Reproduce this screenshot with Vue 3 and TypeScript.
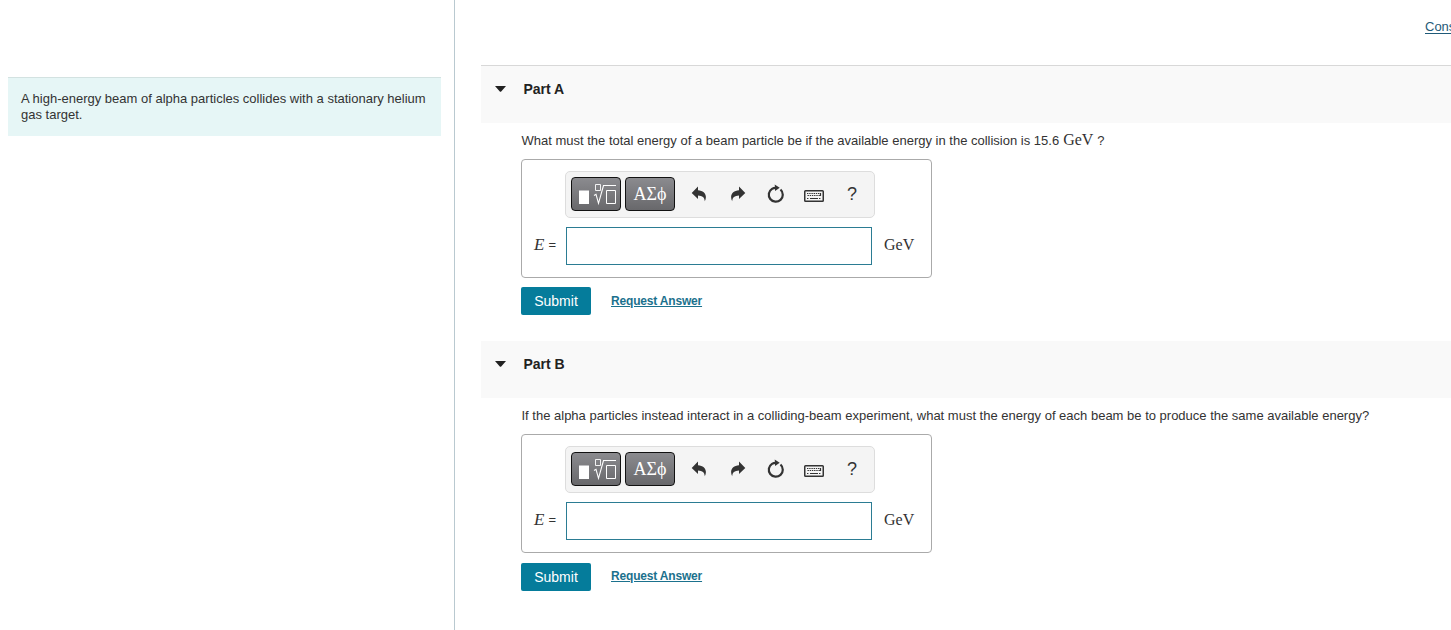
<script setup lang="ts">
import { ref } from 'vue'

interface Part {
  id: string
  title: string
  question: string
  unit?: string
  tail?: string
}

const parts: Part[] = [
  {
    id: 'a',
    title: 'Part A',
    question: 'What must the total energy of a beam particle be if the available energy in the collision is 15.6',
    unit: 'GeV',
    tail: '?'
  },
  {
    id: 'b',
    title: 'Part B',
    question: 'If the alpha particles instead interact in a colliding-beam experiment, what must the energy of each beam be to produce the same available energy?'
  }
]

const answers = ref<Record<string, string>>({ a: '', b: '' })

function reset(id: string) {
  answers.value[id] = ''
}
</script>

<template>
  <div class="page">
    <aside class="side">
      <div class="intro">
        <span class="intro-line">A high-energy beam of alpha particles collides with a stationary helium</span>
        gas target.
      </div>
    </aside>
    <main class="main">
      <div class="top"><a class="constants" href="#">Constants</a></div>
      <section v-for="part in parts" :key="part.id" class="part" :class="'part-' + part.id">
        <header class="part-header">
          <svg class="caret" width="11" height="6" viewBox="0 0 11 6"><path d="M0 0h11L6.200 5.400q-.7.8-1.400 0z" fill="#222" /></svg>
          <h2>{{ part.title }}</h2>
        </header>
        <div class="part-body">
          <p class="question">
            <span class="question-text">{{ part.question }}</span>
            <span v-if="part.unit" class="unit-inline">{{ part.unit }}</span>
            <span v-if="part.tail">{{ part.tail }}</span>
          </p>
          <div class="answer">
            <div class="toolbar">
              <button class="dark" type="button">
                <svg width="48" height="32" viewBox="0 0 48 32" fill="none" stroke="#fff">
                  <path d="M7 12.500h10V26H7z" fill="#fff" stroke="none" />
                  <path d="M23.500 6.500h5v6h-5z" stroke-width=".9" />
                  <path d="M22 17.500l2-1.200 2.500 9L31.500 7.500H44" stroke-width="1.100" />
                  <path d="M34.500 12.500h9v13h-9z" stroke-width="1" />
                </svg>
              </button>
              <button class="dark greek" type="button">ΑΣϕ</button>
              <button class="tool" type="button">
                <svg class="undo" width="16" height="16" viewBox="0 0 16 16"><path d="M7 .5v3.700c4.800.3 7.900 3 7.900 6.800 0 1.600-.4 3-1.100 4.200-.2-3.700-2.300-5.500-6.800-5.700V13L.7 6.900z" fill="#333" /></svg>
              </button>
              <button class="tool" type="button">
                <svg width="16" height="16" viewBox="0 0 16 16"><path d="M9 .5v3.700C4.200 4.500 1.100 7.200 1.100 11c0 1.600.4 3 1.100 4.200.2-3.700 2.300-5.500 6.800-5.700V13l6.300-6.100z" fill="#333" /></svg>
              </button>
              <button class="tool" type="button" @click="reset(part.id)">
                <svg width="20" height="20" viewBox="0 0 20 20">
                  <path d="M14.500 5.500A7 7 0 1 1 6 4.800Q7.500 3.800 10 3.800" fill="none" stroke="#333" stroke-width="2.200" />
                  <path d="M8.700.5l5 3.200-4.600 3.400z" fill="#333" />
                </svg>
              </button>
              <button class="tool" type="button">
                <svg class="keyboard" width="20" height="12" viewBox="0 0 20 12">
                  <rect x=".75" y=".75" width="18.500" height="10.500" rx=".8" fill="#f5f5f5" stroke="#333" stroke-width="1.500" />
                  <path d="M3 3.500h14M3.500 5.500h13M3 8.500h2M15 8.500h2" stroke="#333" stroke-width="1.200" stroke-dasharray="1.400 .8" />
                  <path d="M6 8.500h8M16.500 3v3" stroke="#333" stroke-width="1.200" />
                </svg>
              </button>
              <button class="tool help" type="button">?</button>
            </div>
            <div class="entry">
              <label :for="'answer-' + part.id"><i>E</i><span class="equals">=</span></label>
              <input :id="'answer-' + part.id" v-model="answers[part.id]" type="text">
              <span class="unit">GeV</span>
            </div>
          </div>
          <div class="actions">
            <button class="submit" type="button">Submit</button>
            <a class="request" href="#">Request Answer</a>
          </div>
        </div>
      </section>
    </main>
  </div>
</template>

<style>
body {
  margin: 0;
  overflow: hidden;
  background: #fff;
}
</style>

<style scoped>
.page {
  display: flex;
  height: 630px;
  overflow: hidden;
  font-family: "Liberation Sans", Arial, sans-serif;
  font-size: 13px;
  color: #333;
}

.page * {
  box-sizing: border-box;
}

.side {
  flex: none;
  width: 455px;
  padding: 77px 13px 0 8px;
  border-right: 1px solid #b9c9d0;
}

.intro {
  height: 59px;
  padding: 13px 0 0 13px;
  border-top: 1px solid #d3e2e1;
  background: #e6f6f6;
  line-height: 16px;
}

.intro-line {
  display: block;
  white-space: nowrap;
}

.main {
  flex: 1;
  min-width: 0;
  padding-left: 26px;
}

.top {
  height: 65px;
  padding: 19px 0 0 944px;
  overflow: hidden;
  line-height: 16px;
}

.constants {
  color: #1f5a78;
  text-underline-offset: 2px;
}

.part {
  height: 275px;
}

.part-header {
  display: flex;
  height: 58px;
  padding: 15px 0 0 14px;
  border-top: 1px solid #d8d8d8;
  background: #f9f9f9;
}

.part-b .part-header {
  border-top-color: #fff;
}

.caret {
  margin-top: 5px;
}

h2 {
  margin: 0 0 0 17.5px;
  font-size: 14px;
  line-height: 16px;
  color: #222;
}

.part-body {
  padding-left: 40px;
}

.question {
  display: flex;
  gap: 4px;
  height: 36px;
  margin: 0;
  padding: 9px 0 0 0.5px;
  line-height: 17px;
  white-space: nowrap;
}

.unit-inline,
.unit {
  font-family: "Liberation Serif", serif;
  font-size: 16px;
}

.unit-inline {
  line-height: 15px;
}

.answer {
  width: 411px;
  height: 119px;
  padding-top: 11px;
  border: 1px solid #aaa;
  border-radius: 4px;
}

.toolbar {
  display: flex;
  align-items: center;
  width: 310px;
  height: 47px;
  margin-left: 43px;
  padding: 0 0 1px 5px;
  border: 1px solid #ddd;
  border-radius: 5px;
  background: #f4f4f4;
}

button {
  flex: none;
  margin: 0;
  padding: 0;
  border: 0;
  font-family: inherit;
}

.dark {
  width: 50px;
  height: 34px;
  margin-right: 4px;
  border: 1px solid #111;
  border-radius: 4px;
  background: linear-gradient(#8b8b8f, #68686b);
  color: #fff;
}

.dark svg {
  display: block;
}

.greek {
  margin-right: 6px;
  font-family: "Liberation Serif", serif;
  font-size: 18px;
}

.tool {
  display: flex;
  align-items: center;
  justify-content: center;
  width: 38px;
  height: 34px;
  background: none;
  color: #333;
}

.undo {
  margin-right: 2px;
}

.keyboard {
  margin-top: 4px;
}

.help {
  font-size: 18px;
}

.entry {
  display: flex;
  height: 38px;
  margin-top: 9px;
}

label {
  display: flex;
  width: 44px;
  padding-left: 12px;
  font-family: "Liberation Serif", serif;
  font-size: 17px;
  line-height: 35px;
}

.equals {
  margin-left: 4px;
  font-family: "Liberation Sans", Arial, sans-serif;
  font-size: 13px;
}

input {
  width: 306px;
  height: 38px;
  padding: 0 8px;
  border: 1px solid #2b7c93;
  background: #fff;
  font-size: 16px;
  outline: none;
}

.unit {
  margin-left: 12px;
  line-height: 35px;
}

.actions {
  display: flex;
  padding-top: 9px;
}

.part-b .actions {
  padding-top: 10px;
}

.submit {
  width: 70px;
  height: 28px;
  border-radius: 2px;
  background: #057c9b;
  color: #fff;
  font-size: 14px;
}

.request {
  margin-left: 20px;
  color: #1b718d;
  font-size: 12px;
  font-weight: bold;
  line-height: 28px;
  letter-spacing: -0.18px;
}

.part-b .request {
  line-height: 26px;
}
</style>
